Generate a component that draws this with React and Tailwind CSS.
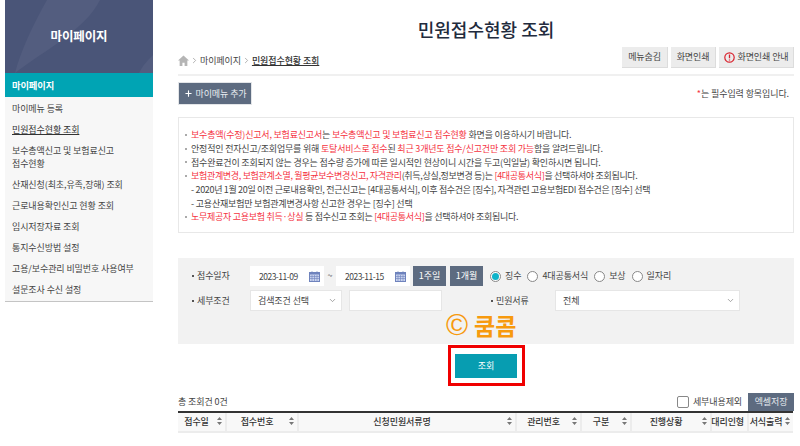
import { ChevronDown, ChevronRight, Plus } from 'lucide-react';

const sideMenu = [
  '마이메뉴 등록',
  '민원접수현황 조회',
  '보수총액신고 및 보험료신고\n접수현황',
  '산재신청(최초,유족,장해) 조회',
  '근로내용확인신고 현황 조회',
  '임시저장자료 조회',
  '통지수신방법 설정',
  '고용/보수관리 비밀번호 사용여부',
  '설문조사 수신 설정',
];

const columns = [
  { label: '접수일', width: 'w-[49px]' },
  { label: '접수번호', width: 'w-[72px]' },
  { label: '신청민원서류명', width: 'w-[218px]' },
  { label: '관리번호', width: 'w-[65px]' },
  { label: '구분', width: 'w-[50px]' },
  { label: '진행상황', width: 'w-[80px]' },
  { label: '대리인형', width: 'w-[37px]', noSort: true },
  { label: '서식출력', width: 'w-[44px]' },
];

const R = ({ children }) => <span className="text-[#f5333f]">{children}</span>;

const Note = ({ children, sub, className = '' }) => (
  <div className={`flex items-center h-[14.3px] whitespace-nowrap ${className}`}>
    {sub ? (
      <span className="w-[6px]" />
    ) : (
      <span className="w-[2px] h-[2px] bg-[#aaa] mr-[4px]" />
    )}
    <span>{children}</span>
  </div>
);

const Sort = () => (
  <svg width="5" height="8" viewBox="0 0 5 8" className="shrink-0 mb-[3px]">
    <path d="M2.5 0 L5 3 H0 Z M2.5 8 L5 5 H0 Z" fill="#777" />
  </svg>
);

const CalendarIcon = () => (
  <svg width="11" height="11" viewBox="0 0 11 11" className="shrink-0">
    <rect x="0.5" y="1.5" width="10" height="9" fill="#c9d3ee" stroke="#6f83bd" />
    <rect x="0.5" y="1.5" width="10" height="2" fill="#6f83bd" />
    <path d="M3 0v2M8 0v2M0.5 5.5h10M0.5 7.5h10M3 4v6M5.5 4v6M8 4v6" stroke="#6f83bd" strokeWidth="0.6" />
  </svg>
);

const Label = ({ children, className = '' }) => (
  <div className={`flex items-center gap-[3px] ${className}`}>
    <span className="w-[2px] h-[2px] bg-[#555]" />
    {children}
  </div>
);

const DateBox = ({ value }) => (
  <div className="w-[74px] h-[20px] bg-white flex items-center justify-between pl-[9px] pr-[4px]">
    <span className="text-[8.5px] tracking-[-0.5px] whitespace-nowrap">{value}</span>
    <CalendarIcon />
  </div>
);

const SelectBox = ({ value, className }) => (
  <div className={`h-[21px] bg-white border border-[#e6e6e6] flex items-center justify-between pl-[7px] pr-[3px] ${className}`}>
    <span>{value}</span>
    <ChevronDown size={9} className="text-[#888] mr-[1px]" />
  </div>
);

const Radio = ({ label, checked }) => (
  <div className="flex items-center gap-[4px]">
    <span className="w-[11px] h-[11px] rounded-full border border-[#888] bg-white flex items-center justify-center">
      {checked && <span className="w-[7px] h-[7px] rounded-full bg-[#0fb3c9]" />}
    </span>
    <span>{label}</span>
  </div>
);

const TopButton = ({ children, className }) => (
  <div className={`h-[21px] bg-[#ececec] border-b border-r border-[#dcdcdc] flex items-center justify-center gap-[3px] ${className}`}>
    {children}
  </div>
);

const App = () => {
  return (
    <div
      className="w-[800px] h-[446px] overflow-hidden bg-white flex text-[9px] text-[#444] tracking-[-0.1px]"
      style={{ fontFamily: '"Noto Sans CJK KR", "Noto Sans", sans-serif' }}
    >
      {/* Sidebar */}
      <aside className="ml-[5px] w-[148px] shrink-0 self-start">
        <div className="relative h-[73px] bg-[#4a5578] flex items-center justify-center overflow-hidden text-white text-[12.5px] font-bold">
          <svg className="absolute inset-0" width="148" height="73" viewBox="0 0 148 73">
            <path d="M10 73 C40 50 80 30 95 0 H42 C28 25 16 50 10 73 Z" fill="#535d7f" />
            <path d="M134 73 C138 65 143 60 148 55 V73 Z" fill="#535d7f" />
          </svg>
          <span className="relative">마이페이지</span>
        </div>
        <div className="h-[24px] bg-[#00a4b4] flex items-center pl-[7px] pt-[1px] text-white font-bold text-[9.25px]">마이페이지</div>
        <ul className="bg-[#f7f7f7] border-b border-[#c4c4c4] pt-[1px] pb-[1px]">
          {sideMenu.map((item, i) => (
            <li key={item} className="px-[7px] py-[4px] leading-[13px] whitespace-pre-line">
              <span className={i === 1 ? 'underline text-[#333]' : ''}>{item}</span>
            </li>
          ))}
        </ul>
      </aside>

      {/* Main Content */}
      <main className="ml-[25px] w-[616px] shrink-0">
        <h1 className="mt-[16px] h-[26px] leading-[26px] text-center text-[18px] font-medium text-[#222b3d] tracking-normal">민원접수현황 조회</h1>
        <div className="mt-[5px] h-[21px] flex items-center justify-between">
          <div className="flex items-center gap-[1px] pt-[6px]">
            <svg width="11" height="11" viewBox="0 0 10 10">
              <path d="M5 0.5 L10 5 H8.5 V10 H6 V7 H4 V10 H1.5 V5 H0 Z" fill="#b5b5b5" />
            </svg>
            <ChevronRight size={9} className="text-[#999]" />
            <span>마이페이지</span>
            <ChevronRight size={9} className="text-[#999]" />
            <span className="underline text-[#333] font-medium">민원접수현황 조회</span>
          </div>
          <div className="flex gap-[3px]">
            <TopButton className="w-[46px]">메뉴숨김</TopButton>
            <TopButton className="w-[45px]">화면인쇄</TopButton>
            <TopButton className="w-[75px]">
              <svg width="11" height="11" viewBox="0 0 11 11">
                <circle cx="5.5" cy="5.5" r="4.7" fill="none" stroke="#d9232e" strokeWidth="1.2" />
                <path d="M5.5 2.6v3.6M5.5 7.4v1.1" stroke="#d9232e" strokeWidth="1.3" />
              </svg>
              화면인쇄 안내
            </TopButton>
          </div>
        </div>
        <div className="mt-[6px] h-[2px] bg-[#f0f0f0]" />

        <div className="mt-[6px] flex items-center justify-between">
          <div className="w-[74px] h-[23px] bg-[#5d6b80] text-[#e8ebf0] flex items-center justify-center gap-[3px] border border-[#e3e5e8]">
            <Plus size={9} strokeWidth={3} className="text-white" />
            마이메뉴 추가
          </div>
          <div className="mr-[5px]"><span className="text-[#f5333f]">*</span>는 필수입력 항목입니다.</div>
        </div>

        <div className="mt-[12px] h-[116px] border border-[#e8e8e8] px-[6px] pt-[10px] pb-[8px] tracking-[-0.2px] flex flex-col justify-center">
          <Note><R>보수총액(수정)신고서, 보험료신고서</R>는 <R>보수총액신고 및 보험료신고 접수현황</R> 화면을 이용하시기 바랍니다.</Note>
          <Note>안정적인 전자신고/조회업무를 위해 <R>토탈서비스로 접수</R>된 <R>최근 3개년도 접수/신고건만 조회 가능</R>함을 알려드립니다.</Note>
          <Note>접수완료건이 조회되지 않는 경우는 접수량 증가에 따른 일시적인 현상이니 시간을 두고(익일날) 확인하시면 됩니다.</Note>
          <Note className="tracking-[-0.32px]"><R>보험관계변경, 보험관계소멸, 월평균보수변경신고, 자격관리</R>(취득,상실,정보변경 등)는 <R>[4대공통서식]</R>을 선택하셔야 조회됩니다.</Note>
          <Note sub className="tracking-[-0.33px]">- 2020년 1월 20일 이전 근로내용확인, 전근신고는 [4대공통서식], 이후 접수건은 [징수], 자격관련 고용보험EDI 접수건은 [징수] 선택</Note>
          <Note sub>- 고용산재보험만 보험관계변경사항 신고한 경우는 [징수] 선택</Note>
          <Note className="tracking-[-0.28px]"><R>노무제공자 고용보험 취득·상실</R> 등 접수신고 조회는 <R>[4대공통서식]</R>을 선택하셔야 조회됩니다.</Note>
        </div>

        {/* Search filter */}
        <div className="relative mt-[25px] h-[86px] bg-[#f2f2f2] pt-[8px] pl-[14px]">
          <div className="flex items-center h-[20px]">
            <Label className="w-[58px]">접수일자</Label>
            <DateBox value="2023-11-09" />
            <span className="w-[12px] text-center">~</span>
            <DateBox value="2023-11-15" />
            <div className="ml-[3px] w-[33px] h-[20px] bg-[#5d6b80] text-white flex items-center justify-center">1주일</div>
            <div className="ml-[4px] w-[33px] h-[20px] bg-[#5d6b80] text-white flex items-center justify-center">1개월</div>
            <div className="ml-[7px] flex items-center gap-[6px]">
              <Radio label="징수" checked />
              <Radio label="4대공통서식" />
              <Radio label="보상" />
              <Radio label="일자리" />
            </div>
          </div>
          <div className="mt-[4px] flex items-center h-[21px]">
            <Label className="w-[58px]">세부조건</Label>
            <SelectBox value="검색조건 선택" className="w-[92px]" />
            <div className="ml-[7px] w-[93px] h-[21px] bg-white border border-[#e6e6e6]" />
            <Label className="ml-[49px] w-[64px]">민원서류</Label>
            <SelectBox value="전체" className="w-[185px]" />
          </div>
          <div className="absolute left-[268px] top-[53px] flex items-center gap-[6px] text-[#f79a0e] font-bold text-[23px] leading-[28px] tracking-normal">
            <span className="text-[30px] font-normal" style={{ fontFamily: '"Liberation Sans", sans-serif' }}>©</span>
            <span>쿰콤</span>
          </div>
        </div>

        <div className="mt-[1px] flex justify-center">
          <div className="w-[77px] h-[41px] border-[3px] border-[#f00000] flex items-center justify-center">
            <div className="w-[62px] h-[24px] bg-[#079db1] text-white flex items-center justify-center">조회</div>
          </div>
        </div>

        <div className="mt-[6px] h-[19px] flex items-center justify-between">
          <span>총 조회건 0건</span>
          <div className="flex items-center">
            <span className="w-[12px] h-[12px] bg-white border border-[#888] rounded-[2px] mr-[4px]" />
            <span>세부내용제외</span>
            <div className="ml-[6px] w-[46px] h-[18px] bg-[#5d6b80] text-[#e8ebf0] flex items-center justify-center">엑셀저장</div>
          </div>
        </div>

        <div className="border-t-2 border-[#333] border-b-2 border-b-[#ececec] bg-[#f8f8f8] h-[22px] flex text-[#333] font-medium w-[615px]">
          {columns.map((col, i) => (
            <div
              key={col.label}
              className={`${col.width} shrink-0 flex items-center justify-end gap-[2px] pr-[3px] ${i < columns.length - 1 ? 'border-r-2 border-[#ececec]' : ''}`}
            >
              <span className="flex-1 text-center whitespace-nowrap">{col.label}</span>
              {!col.noSort && <Sort />}
            </div>
          ))}
        </div>
      </main>
    </div>
  );
};

export default App;
